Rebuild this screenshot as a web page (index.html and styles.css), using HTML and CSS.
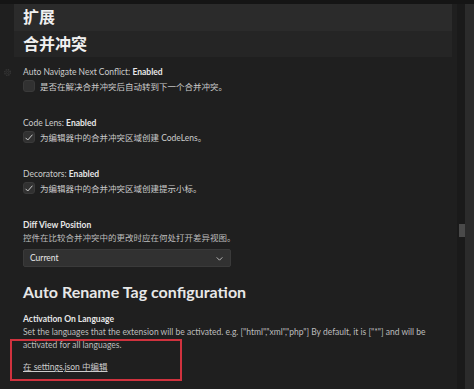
FILE: index.html
```html
<!DOCTYPE html>
<html lang="zh-CN">
<head>
  <meta charset="UTF-8">
  <title>设置</title>
  <link rel="stylesheet" href="styles.css">
</head>
<body>
  <div class="barra-topo"></div>

  <div class="janela">
    <div class="painel">
      <header class="cabecalho">
        <div class="titulo-grupo">扩展</div>
        <div class="titulo-sub">合并冲突</div>
      </header>

      <main class="conteudo">
        <div class="item">
          <svg class="engrenagem" width="9" height="9" viewBox="0 0 16 16">
            <circle cx="8" cy="8" r="5" fill="none" stroke="#3a3a3a" stroke-width="2.2" stroke-dasharray="2.4 1.5"/>
            <circle cx="8" cy="8" r="2" fill="none" stroke="#3a3a3a" stroke-width="1.3"/>
          </svg>
          <div class="rotulo">Auto Navigate Next Conflict: <b>Enabled</b></div>
          <label class="linha-check">
            <span class="caixa"></span>
            是否在解决合并冲突后自动转到下一个合并冲突。
          </label>
        </div>

        <div class="item">
          <div class="rotulo">Code Lens: <b>Enabled</b></div>
          <label class="linha-check">
            <span class="caixa">
              <svg width="11" height="11" viewBox="0 0 16 16"><path d="M2.5 8.5l3.5 3.5 7.5-8.5" fill="none" stroke="#cccccc" stroke-width="1.6"/></svg>
            </span>
            为编辑器中的合并冲突区域创建 CodeLens。
          </label>
        </div>

        <div class="item">
          <div class="rotulo">Decorators: <b>Enabled</b></div>
          <label class="linha-check">
            <span class="caixa">
              <svg width="11" height="11" viewBox="0 0 16 16"><path d="M2.5 8.5l3.5 3.5 7.5-8.5" fill="none" stroke="#cccccc" stroke-width="1.6"/></svg>
            </span>
            为编辑器中的合并冲突区域创建提示小标。
          </label>
        </div>

        <div class="item">
          <div class="rotulo"><b>Diff View Position</b></div>
          <div class="descricao">控件在比较合并冲突中的更改时应在何处打开差异视图。</div>
          <div class="seletor">
            <span>Current</span>
            <svg width="9" height="9" viewBox="0 0 16 16"><path d="M3 6l5 5 5-5" fill="none" stroke="#c5c5c5" stroke-width="1.6"/></svg>
          </div>
        </div>

        <h2 class="secao">Auto Rename Tag configuration</h2>

        <div class="item ultimo">
          <div class="rotulo"><b>Activation On Language</b></div>
          <div class="descricao">Set the languages that the extension will be activated. e.g. ["html","xml","php"] By default, it is ["*"] and will be activated for all languages.</div>
          <a class="link" href="#">在 settings.json 中编辑</a>
        </div>
      </main>

      <div class="destaque"></div>
    </div>

    <div class="rolagem">
      <div class="polegar"></div>
    </div>
    <div class="lateral"></div>
  </div>
</body>
</html>
```

FILE: styles.css
```css
:root {
  --fundo: #1f1f1f;
  --texto: #cccccc;
  --texto-forte: #e7e7e7;
  --fonte: Lato, 'Noto Sans CJK SC', sans-serif;
}

* {
  margin: 0;
  padding: 0;
  box-sizing: border-box;
}

body {
  width: 474px;
  height: 389px;
  overflow: hidden;
  background-color: var(--fundo);
  color: var(--texto);
  font-family: var(--fonte);
  font-size: 8.5px;
}

.barra-topo {
  height: 4px;
  background-color: #151515;
}

.janela {
  display: flex;
  height: 385px;
}

.painel {
  position: relative;
  width: 457px;
}

.cabecalho {
  margin-left: 14px;
  width: 438px;
  color: #f0f0f0;
  font-weight: bold;
  font-size: 16px;
}

.titulo-grupo,
.titulo-sub {
  height: 26.5px;
  line-height: 26px;
  padding-left: 9px;
}

.titulo-grupo {
  background-color: #2b2b2b;
}

.titulo-sub {
  background-color: #252525;
}

.conteudo {
  padding: 8px 18px 0 23px;
}

.item {
  position: relative;
  padding-bottom: 23px;
}

.engrenagem {
  position: absolute;
  left: -20px;
  top: 3px;
}

.rotulo {
  line-height: 14px;
  color: var(--texto);
}

.rotulo b {
  color: var(--texto-forte);
  font-weight: bold;
}

.linha-check {
  display: flex;
  align-items: center;
  gap: 5px;
  height: 14px;
}

.caixa {
  display: flex;
  align-items: center;
  justify-content: center;
  width: 12px;
  height: 12px;
  border-radius: 3px;
  background-color: #313131;
  border: 1px solid #3a3a3a;
}

.descricao {
  line-height: 13px;
  color: #bdbdbd;
}

.seletor {
  display: flex;
  justify-content: space-between;
  align-items: center;
  width: 208px;
  height: 18px;
  margin-top: 4px;
  padding: 0 6px;
  background-color: #313131;
  border: 1px solid #3a3a3a;
  border-radius: 2px;
  color: var(--texto-forte);
}

.item:has(.seletor) {
  padding-bottom: 15px;
}

.secao {
  font-size: 16px;
  font-weight: bold;
  color: var(--texto-forte);
  line-height: 20px;
  margin-bottom: 10px;
}

.link {
  display: inline-block;
  margin-top: 8px;
  color: var(--texto);
  text-decoration: underline;
  line-height: 14px;
}

.destaque {
  position: absolute;
  left: 10px;
  top: 335px;
  width: 172px;
  height: 42px;
  border: 2px solid #d0323e;
}

.rolagem {
  position: relative;
  width: 8px;
  background-color: #1a1a1a;
}

.polegar {
  position: absolute;
  left: 2px;
  top: 220px;
  width: 6px;
  height: 13px;
  background-color: #4a4a4a;
}

.lateral {
  flex: 1;
  background-color: #2b2b2b;
}
```
